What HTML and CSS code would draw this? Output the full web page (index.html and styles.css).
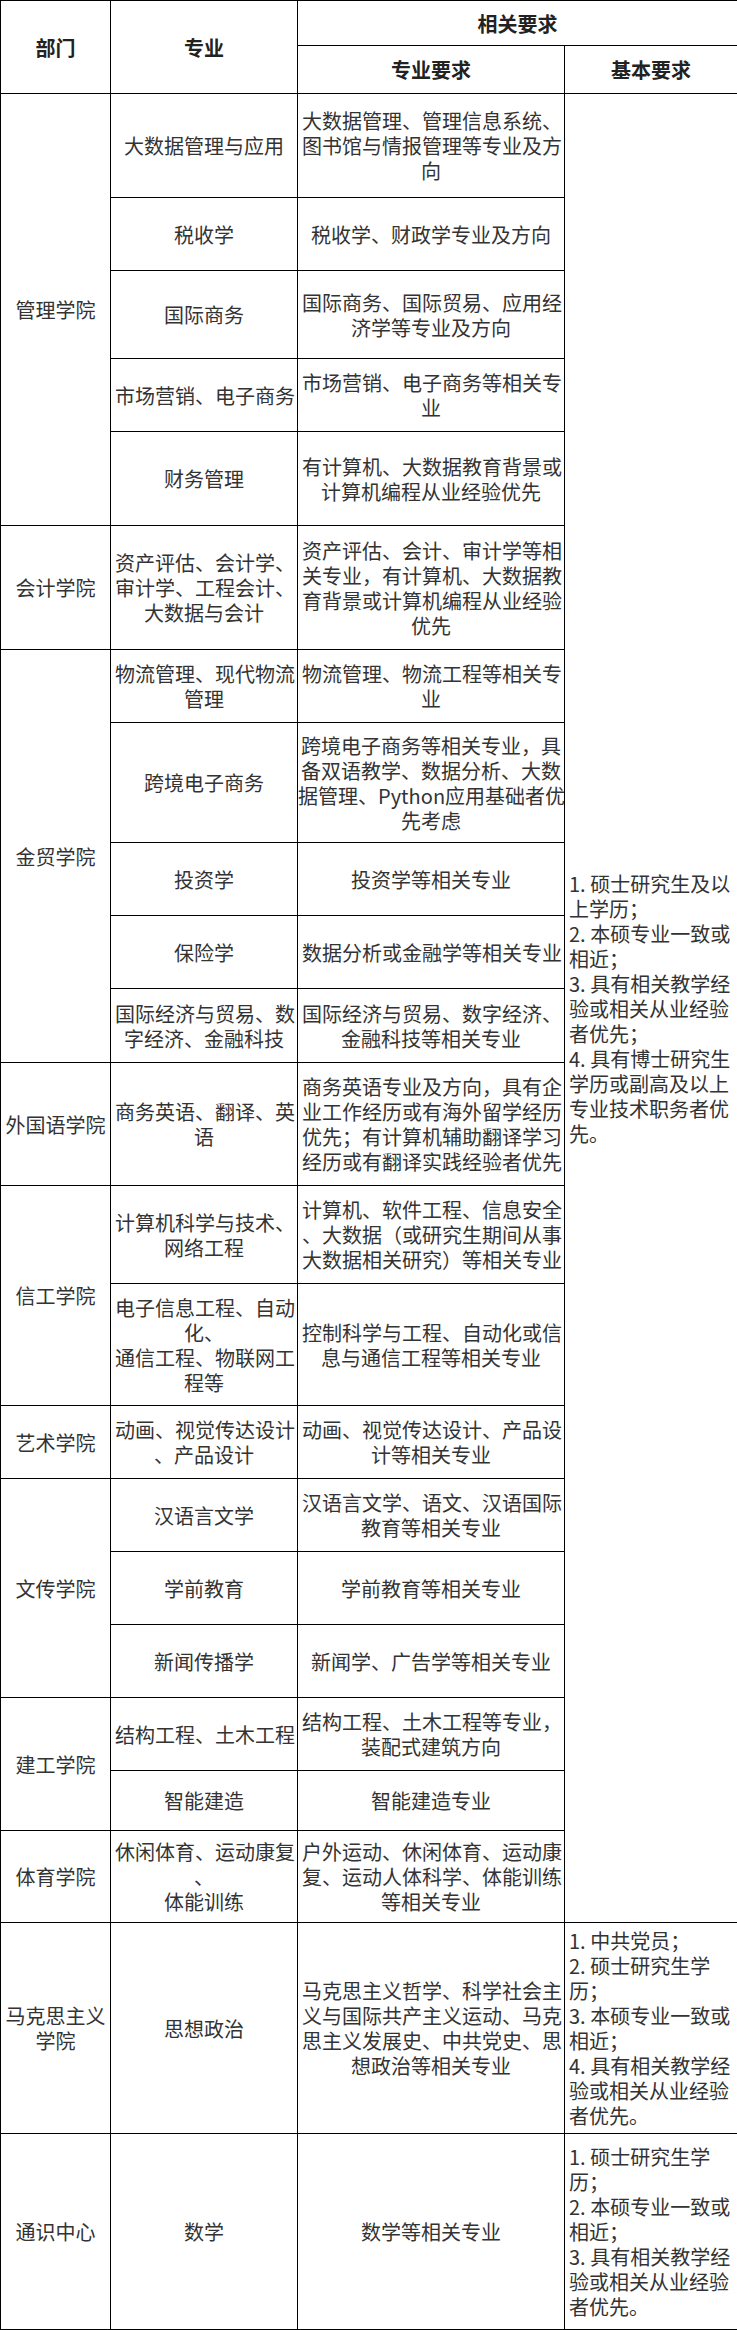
FILE: index.html
```html
<!DOCTYPE html>
<html lang="zh-CN">
<head>
<meta charset="utf-8">
<title>招聘岗位要求</title>
<link rel="stylesheet" href="styles.css">
</head>
<body>
<table class="req">
  <colgroup>
    <col class="c-dept">
    <col class="c-major">
    <col class="c-spec">
    <col class="c-basic">
  </colgroup>
  <thead>
    <tr class="r45">
      <th rowspan="2">部门</th>
      <th rowspan="2">专业</th>
      <th colspan="2">相关要求</th>
    </tr>
    <tr class="r48">
      <th>专业要求</th>
      <th>基本要求</th>
    </tr>
  </thead>
  <tbody>
    <tr class="r104">
      <td rowspan="5">管理学院</td>
      <td>大数据管理与应用</td>
      <td>大数据管理、管理信息系统、<br>图书馆与情报管理等专业及方<br>向</td>
      <td rowspan="21" class="basic">1. 硕士研究生及以<br>上学历；<br>2. 本硕专业一致或<br>相近；<br>3. 具有相关教学经<br>验或相关从业经验<br>者优先；<br>4. 具有博士研究生<br>学历或副高及以上<br>专业技术职务者优<br>先。</td>
    </tr>
    <tr class="r73">
      <td>税收学</td>
      <td>税收学、财政学专业及方向</td>
    </tr>
    <tr class="r88">
      <td>国际商务</td>
      <td>国际商务、国际贸易、应用经<br>济学等专业及方向</td>
    </tr>
    <tr class="r73">
      <td>市场营销、电子商务</td>
      <td>市场营销、电子商务等相关专<br>业</td>
    </tr>
    <tr class="r94">
      <td>财务管理</td>
      <td>有计算机、大数据教育背景或<br>计算机编程从业经验优先</td>
    </tr>
    <tr class="r124">
      <td>会计学院</td>
      <td>资产评估、会计学、<br>审计学、工程会计、<br>大数据与会计</td>
      <td>资产评估、会计、审计学等相<br>关专业，有计算机、大数据教<br>育背景或计算机编程从业经验<br>优先</td>
    </tr>
    <tr class="r73">
      <td rowspan="5">金贸学院</td>
      <td>物流管理、现代物流<br>管理</td>
      <td>物流管理、物流工程等相关专<br>业</td>
    </tr>
    <tr class="r120">
      <td>跨境电子商务</td>
      <td class="tight">跨境电子商务等相关专业，具<br>备双语教学、数据分析、大数<br>据管理、Python应用基础者优<br>先考虑</td>
    </tr>
    <tr class="r73">
      <td>投资学</td>
      <td>投资学等相关专业</td>
    </tr>
    <tr class="r73">
      <td>保险学</td>
      <td>数据分析或金融学等相关专业</td>
    </tr>
    <tr class="r74">
      <td>国际经济与贸易、数<br>字经济、金融科技</td>
      <td>国际经济与贸易、数字经济、<br>金融科技等相关专业</td>
    </tr>
    <tr class="r123">
      <td class="tight">外国语学院</td>
      <td>商务英语、翻译、英<br>语</td>
      <td>商务英语专业及方向，具有企<br>业工作经历或有海外留学经历<br>优先；有计算机辅助翻译学习<br>经历或有翻译实践经验者优先</td>
    </tr>
    <tr class="r98">
      <td rowspan="2">信工学院</td>
      <td>计算机科学与技术、<br>网络工程</td>
      <td>计算机、软件工程、信息安全<br>、大数据（或研究生期间从事<br>大数据相关研究）等相关专业</td>
    </tr>
    <tr class="r122">
      <td>电子信息工程、自动<br>化、<br>通信工程、物联网工<br>程等</td>
      <td>控制科学与工程、自动化或信<br>息与通信工程等相关专业</td>
    </tr>
    <tr class="r73">
      <td>艺术学院</td>
      <td>动画、视觉传达设计<br>、产品设计</td>
      <td>动画、视觉传达设计、产品设<br>计等相关专业</td>
    </tr>
    <tr class="r73">
      <td rowspan="3">文传学院</td>
      <td>汉语言文学</td>
      <td>汉语言文学、语文、汉语国际<br>教育等相关专业</td>
    </tr>
    <tr class="r73">
      <td>学前教育</td>
      <td>学前教育等相关专业</td>
    </tr>
    <tr class="r73">
      <td>新闻传播学</td>
      <td>新闻学、广告学等相关专业</td>
    </tr>
    <tr class="r73">
      <td rowspan="2">建工学院</td>
      <td>结构工程、土木工程</td>
      <td>结构工程、土木工程等专业，<br>装配式建筑方向</td>
    </tr>
    <tr class="r60">
      <td>智能建造</td>
      <td>智能建造专业</td>
    </tr>
    <tr class="r92">
      <td>体育学院</td>
      <td>休闲体育、运动康复<br>、<br>体能训练</td>
      <td>户外运动、休闲体育、运动康<br>复、运动人体科学、体能训练<br>等相关专业</td>
    </tr>
    <tr class="r211">
      <td class="tight">马克思主义<br>学院</td>
      <td>思想政治</td>
      <td>马克思主义哲学、科学社会主<br>义与国际共产主义运动、马克<br>思主义发展史、中共党史、思<br>想政治等相关专业</td>
      <td class="basic">1. 中共党员；<br>2. 硕士研究生学<br>历；<br>3. 本硕专业一致或<br>相近；<br>4. 具有相关教学经<br>验或相关从业经验<br>者优先。</td>
    </tr>
    <tr class="r196">
      <td>通识中心</td>
      <td>数学</td>
      <td>数学等相关专业</td>
      <td class="basic">1. 硕士研究生学<br>历；<br>2. 本硕专业一致或<br>相近；<br>3. 具有相关教学经<br>验或相关从业经验<br>者优先。</td>
    </tr>
  </tbody>
</table>
</body>
</html>
```

FILE: styles.css
```css
html, body {
  margin: 0;
  padding: 0;
  background: #ffffff;
}

.req {
  width: 737px;
  table-layout: fixed;
  border-collapse: collapse;
  font-family: "Noto Sans CJK SC", "Noto Sans", sans-serif;
  font-size: 20px;
  line-height: 25px;
  color: #333333;
}

.c-dept { width: 110px; }
.c-major { width: 187px; }
.c-spec { width: 267px; }
.c-basic { width: 173px; }

.req th,
.req td {
  border: 1px solid #000000;
  padding: 0 4px;
  text-align: center;
  vertical-align: middle;
  white-space: nowrap;
  overflow: hidden;
}

.req th {
  font-weight: bold;
  color: #222222;
}

.req td.tight {
  padding: 0;
}

.req td.basic {
  text-align: left;
  padding: 0 3px 0 4px;
}

.r45 { height: 45px; }
.r48 { height: 48px; }
.r60 { height: 60px; }
.r73 { height: 73px; }
.r74 { height: 74px; }
.r88 { height: 88px; }
.r92 { height: 92px; }
.r94 { height: 94px; }
.r98 { height: 98px; }
.r104 { height: 104px; }
.r120 { height: 120px; }
.r122 { height: 122px; }
.r123 { height: 123px; }
.r124 { height: 124px; }
.r196 { height: 196px; }
.r211 { height: 211px; }
```
